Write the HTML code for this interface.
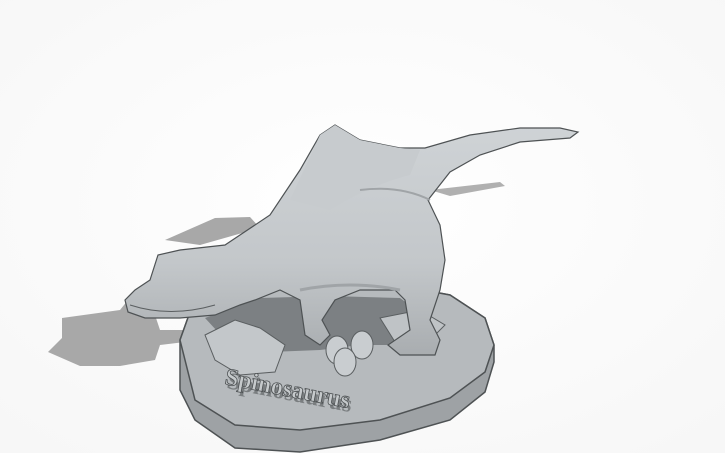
<!DOCTYPE html>
<html><head><style>html,body{margin:0;padding:0;background:#fff;width:725px;height:453px;overflow:hidden}</style></head>
<body>
<svg width="725" height="453" viewBox="0 0 725 453" xmlns="http://www.w3.org/2000/svg">
<defs>
<radialGradient id="bg" cx="50%" cy="45%" r="70%"><stop offset="0" stop-color="#ffffff"/><stop offset="1" stop-color="#f7f7f7"/></radialGradient>
<linearGradient id="body" x1="0" y1="0" x2="0" y2="1"><stop offset="0" stop-color="#cfd3d6"/><stop offset="0.6" stop-color="#c3c7ca"/><stop offset="1" stop-color="#a9adb0"/></linearGradient>
</defs>
<rect width="725" height="453" fill="url(#bg)"/>
<path d="M48,352 L62,338 L62,318 L120,310 L128,300 L150,300 L160,330 L190,330 L185,342 L160,345 L155,360 L120,366 L80,366 Z" fill="#a8a8a8"/>
<path d="M165,240 L215,218 L250,217 L260,228 L200,245 Z" fill="#a8a8a8"/>
<path d="M430,190 L500,182 L505,186 L450,196 Z" fill="#b0b0b0"/>
<path d="M180,340 L190,312 L230,292 L300,282 L380,282 L450,295 L485,318 L494,345 L494,362 L485,392 L450,420 L380,440 L300,452 L235,448 L195,420 L180,390 Z" fill="#9ea2a5" stroke="#4e5254" stroke-width="1.5"/>
<path d="M180,340 L190,312 L230,292 L300,282 L380,282 L450,295 L485,318 L494,345 L485,372 L450,398 L380,420 L300,430 L235,425 L195,400 Z" fill="#b6babd" stroke="#4e5254" stroke-width="1.5"/>
<path d="M205,318 L260,298 L330,296 L400,298 L430,320 L415,345 L360,345 L320,350 L270,352 L230,345 Z" fill="#7c8083"/>
<path d="M205,335 L235,320 L260,328 L285,345 L275,372 L240,375 L215,360 Z" fill="#c3c7ca" stroke="#5a5e60" stroke-width="1"/>
<path d="M380,318 L420,310 L445,325 L430,340 L395,342 Z" fill="#bfc3c6" stroke="#5a5e60" stroke-width="1"/>
<text x="226" y="388" font-family="Liberation Serif, serif" font-weight="bold" font-size="24" fill="#7a7e80" transform="rotate(11 226 388)">Spinosaurus</text>
<text x="224" y="384" font-family="Liberation Serif, serif" font-weight="bold" font-size="24" fill="#c6cacc" stroke="#4e5254" stroke-width="0.8" transform="rotate(11 224 384)">Spinosaurus</text>
<path d="M125,300 L135,290 L150,280 L158,255 L180,250 L225,245 L240,235 L270,215 L300,170 L320,135 L335,125 L360,140 L400,148 L425,148 L470,135 L520,128 L560,128 L578,132 L570,138 L520,142 L480,155 L450,172 L428,200 L440,225 L445,260 L440,290 L430,320 L440,340 L435,355 L400,355 L388,345 L410,330 L405,300 L395,290 L360,290 L335,300 L322,320 L330,335 L320,345 L305,335 L300,300 L280,290 L255,300 L240,305 L215,315 L180,318 L145,318 L128,312 Z" fill="url(#body)" stroke="#4e5254" stroke-width="1.2"/>
<path d="M320,135 L335,125 L360,140 L400,148 L420,150 L410,175 Q370,185 330,210 L290,200 Z" fill="#c7cbce"/>
<path d="M360,190 Q400,185 430,200" stroke="#a0a4a7" fill="none" stroke-width="2"/>
<path d="M300,290 Q350,280 400,290" stroke="#a0a4a7" fill="none" stroke-width="3"/>
<path d="M130,305 Q170,318 215,305" stroke="#5a5e60" fill="none"/>
<ellipse cx="337" cy="350" rx="11" ry="14" fill="#c9cdd0" stroke="#5a5e60"/>
<ellipse cx="362" cy="345" rx="11" ry="14" fill="#c9cdd0" stroke="#5a5e60"/>
<ellipse cx="345" cy="362" rx="11" ry="14" fill="#c9cdd0" stroke="#5a5e60"/>
</svg>
</body></html>
